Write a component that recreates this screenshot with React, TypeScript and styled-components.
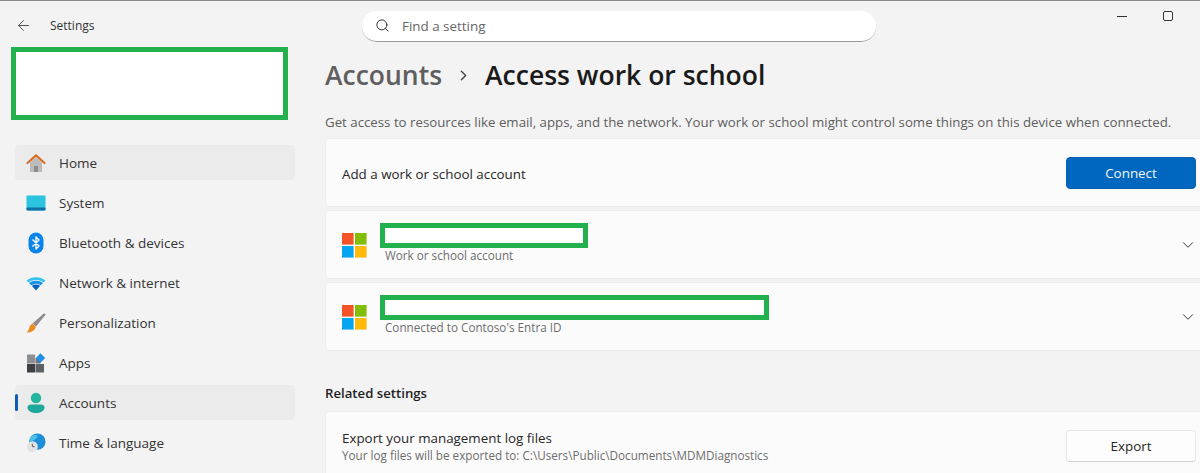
import React from "react";
import styled, { createGlobalStyle } from "styled-components";
import { ArrowLeft, ChevronDown, ChevronRight, Search } from "lucide-react";

const GlobalStyle = createGlobalStyle`
  html, body {
    margin: 0;
    padding: 0;
    height: 100%;
    overflow: hidden;
    background: #f3f3f3;
  }
  * {
    box-sizing: border-box;
  }
`;

const Page = styled.div`
  width: 1200px;
  height: 473px;
  overflow: hidden;
  display: flex;
  flex-direction: column;
  background: #f3f3f3;
  border-top: 1px solid #8a8a8a;
  font-family: "Open Sans", "Noto Sans", sans-serif;
  color: #1b1b1b;
`;

const TitleBar = styled.header`
  height: 46px;
  flex-shrink: 0;
  display: flex;
  align-items: center;
  padding: 2px 0 0 15px;
`;

const BackButton = styled.div`
  width: 17px;
  display: flex;
  color: #444;
`;

const AppName = styled.span`
  margin-left: 18px;
  width: 312px;
  font-size: 12px;
  color: #333;
`;

const SearchBox = styled.div`
  width: 514px;
  height: 31px;
  margin-top: 3px;
  display: flex;
  align-items: center;
  gap: 12px;
  padding: 0 0 1px 13px;
  background: #fff;
  border-radius: 15px;
  border-bottom: 1px solid #9a9a9a;
  font-size: 13.4px;
  color: #666;
`;

const WindowControls = styled.div`
  margin-left: auto;
  margin-right: 27px;
  margin-top: -18px;
  display: flex;
  align-items: center;
  gap: 36px;
`;

const Minimize = styled.div`
  width: 10px;
  height: 1px;
  background: #333;
`;

const Maximize = styled.div`
  width: 10px;
  height: 10px;
  border: 1px solid #333;
  border-radius: 2px;
`;

const Body = styled.div`
  flex: 1;
  display: flex;
  min-height: 0;
`;

const Sidebar = styled.aside`
  width: 295px;
  flex-shrink: 0;
  padding-left: 11px;
`;

const RedactedProfile = styled.div`
  width: 277px;
  height: 73px;
  background: #fff;
  border: 5px solid #22b14c;
`;

const Nav = styled.nav`
  margin: 25px 0 0 4px;
  display: flex;
  flex-direction: column;
  gap: 5px;
`;

const NavItem = styled.div<{ $active?: boolean }>`
  position: relative;
  height: 35px;
  flex-shrink: 0;
  display: flex;
  align-items: center;
  gap: 13px;
  padding: 1px 0 0 11px;
  border-radius: 4px;
  font-size: 13.5px;
  color: #333;
  background: ${(p) => (p.$active ? "#ecebeb" : "transparent")};
`;

const ActiveMark = styled.span`
  position: absolute;
  left: 0;
  top: 9px;
  width: 3px;
  height: 17px;
  border-radius: 2px;
  background: #0a5fb4;
`;

const IconSlot = styled.span`
  width: 20px;
  height: 22px;
  flex-shrink: 0;
  display: flex;
  align-items: center;
  justify-content: center;
`;

const Main = styled.main`
  flex: 1;
  min-width: 0;
  margin-left: 30px;
`;

const Breadcrumb = styled.div`
  height: 56px;
  display: flex;
  align-items: center;
  font-size: 26.5px;
  font-weight: 600;
  color: #1a1a1a;
`;

const Parent = styled.span`
  color: #5f5f5f;
`;

const Crumb = styled.span`
  width: 43px;
  display: flex;
  justify-content: center;
  color: #444;
`;

const Description = styled.p`
  margin: 10px 0 6px;
  font-size: 13.27px;
  line-height: 19px;
  color: #5e5e5e;
  white-space: nowrap;
`;

const Cards = styled.div`
  display: flex;
  flex-direction: column;
  gap: 3px;
  margin-right: -12px;
`;

const Card = styled.section`
  height: 69px;
  flex-shrink: 0;
  display: flex;
  align-items: center;
  padding: 0 16px;
  background: #fbfbfb;
  border: 1px solid #ececec;
  border-radius: 4px;
`;

const CardTitle = styled.div<{ $alone?: boolean }>`
  padding-top: ${(p) => (p.$alone ? "3px" : "0")};
  font-size: 13.36px;
  line-height: 19px;
  color: #262626;
`;

const CardText = styled.div`
  flex: 1;
  min-width: 0;
`;

const CardNote = styled.div`
  font-size: 11.7px;
  line-height: 14px;
  color: #6d6d6d;
`;

const ConnectButton = styled.div`
  width: 130px;
  height: 32px;
  margin-right: -1px;
  padding-top: 1px;
  display: flex;
  align-items: center;
  justify-content: center;
  background: #0067c0;
  border: 1px solid #0a5fb0;
  border-radius: 4px;
  font-size: 13.4px;
  color: #f2f7fc;
`;

const ExportButton = styled.div`
  width: 130px;
  height: 32px;
  margin-right: -1px;
  display: flex;
  align-items: center;
  justify-content: center;
  background: #fdfdfd;
  border: 1px solid #e6e6e6;
  border-bottom-color: #d2d2d2;
  border-radius: 4px;
  font-size: 13.4px;
  color: #262626;
`;

const AccountLogo = styled.svg`
  width: 25px;
  height: 25px;
  flex-shrink: 0;
  margin: 2px 18px 0 0;
`;

const AccountInfo = styled.div`
  flex: 1;
  min-width: 0;
  align-self: flex-start;
  padding-top: 12px;
`;

const RedactedName = styled.div<{ $width: number }>`
  width: ${(p) => p.$width}px;
  height: 25px;
  margin-left: -5px;
  background: #fff;
  border: 5px solid #22b14c;
`;

const Chevron = styled.div`
  display: flex;
  margin-right: -2px;
  color: #333;
`;

const SectionTitle = styled.h2`
  margin: 33px 0 8px;
  font-size: 13.2px;
  line-height: 19px;
  font-weight: 600;
  color: #1f1f1f;
`;

const MsLogo = () => (
  <AccountLogo viewBox="0 0 25 25">
    <rect x="0" y="0" width="11.6" height="11.6" fill="#f35325" />
    <rect x="13" y="0" width="11.6" height="11.6" fill="#81bc06" />
    <rect x="0" y="13" width="11.6" height="11.6" fill="#05a6f0" />
    <rect x="13" y="13" width="11.6" height="11.6" fill="#ffba08" />
  </AccountLogo>
);

const HomeIcon = () => (
  <svg width="20" height="20" viewBox="0 0 20 20">
    <path d="M4 9.5 10 4l6 5.500V19h-4v-5H8v5H4z" fill="#bdbbba" />
    <path d="M8 13h4v6H8z" fill="#8e8c8b" />
    <path d="M1.500 10 10 2.200 18.500 10" fill="none" stroke="#d9681f" strokeWidth="2" strokeLinecap="round" strokeLinejoin="round" />
  </svg>
);

const SystemIcon = () => (
  <svg width="20" height="20" viewBox="0 0 20 20">
    <rect x="0.500" y="2.500" width="19" height="15" rx="1" fill="#2bc3de" />
    <rect x="0.500" y="14.500" width="19" height="3" rx="1" fill="#0f6fa8" />
  </svg>
);

const BluetoothIcon = () => (
  <svg width="20" height="22" viewBox="0 0 20 22">
    <rect x="2.500" y="0.500" width="15" height="21" rx="7.500" fill="#0a84ea" />
    <path d="M6.500 7.500 13 14l-3 3V5l3 3-6.500 6.500" fill="none" stroke="#fff" strokeWidth="1.400" strokeLinejoin="round" />
  </svg>
);

const WifiIcon = () => (
  <svg width="20" height="16" viewBox="0 0 20 16">
    <path d="M0.500 5.500C5.500 1 14.500 1 19.500 5.500L17.500 7.500C13 4.300 7 4.300 2.500 7.500z" fill="#34c3ee" />
    <path d="M3 8C7.200 5 12.800 5 17 8L14.800 10.200C11.800 8.200 8.200 8.200 5.200 10.200z" fill="#1593e4" />
    <path d="M5.800 10.800C8.200 9.200 11.800 9.200 14.200 10.800L10 15.500z" fill="#0a63c4" />
  </svg>
);

const BrushIcon = () => (
  <svg width="20" height="20" viewBox="0 0 20 20">
    <path d="M18 0.300 19.700 1.500 10 13.500 6.500 10.500z" fill="#8d8d8d" />
    <path d="M6.500 10.800 9.800 13.700C9 17.500 5 19.700 0.300 19.500 3 18 2.800 16 3.600 13.800 4.200 12.400 5.200 11.500 6.500 10.800z" fill="#ee8a1d" />
  </svg>
);

const AppsIcon = () => (
  <svg width="20" height="20" viewBox="0 0 20 20">
    <rect x="1" y="1.500" width="8" height="9" fill="#8b8f94" />
    <rect x="1" y="11" width="8" height="8.500" fill="#3c3f43" />
    <rect x="9.500" y="11" width="8.500" height="8.500" fill="#5d6166" />
    <rect x="9.500" y="5" width="5" height="5.500" fill="#6f7378" />
    <path d="M14.500 0.300 19.200 5 14.500 9.700 9.800 5z" fill="#1f8fe8" />
  </svg>
);

const AccountIcon = () => (
  <svg width="20" height="22" viewBox="0 0 20 22">
    <circle cx="10" cy="6" r="5.200" fill="#22b5a0" />
    <path d="M1.500 15.500C1.500 13.500 3 12.500 5 12.500h10c2 0 3.500 1 3.500 3 0 3.500-4 5.500-8.500 5.500s-8.500-2-8.500-5.500z" fill="#1ea89a" />
  </svg>
);

const TimeIcon = () => (
  <svg width="22" height="22" viewBox="0 0 22 22">
    <circle cx="12.500" cy="9.500" r="9" fill="#1d8fd8" />
    <path d="M6 3.500C9 1.500 12 2 13 3.500 12 6 9.500 6.500 8 8.500 6.500 9.500 4.500 9 3.500 9 3.500 7 4.500 5 6 3.500z" fill="#4cc2e8" />
    <circle cx="7" cy="15" r="6" fill="#e3e3e3" />
    <path d="M7 11.800V15h2.500" fill="none" stroke="#555" strokeWidth="1" />
  </svg>
);

const navItems = [
  { label: "Home", icon: <HomeIcon />, active: true },
  { label: "System", icon: <SystemIcon /> },
  { label: "Bluetooth & devices", icon: <BluetoothIcon /> },
  { label: "Network & internet", icon: <WifiIcon /> },
  { label: "Personalization", icon: <BrushIcon /> },
  { label: "Apps", icon: <AppsIcon /> },
  { label: "Accounts", icon: <AccountIcon />, active: true, mark: true },
  { label: "Time & language", icon: <TimeIcon /> },
];

export default function App() {
  return (
    <Page>
      <GlobalStyle />
      <TitleBar>
        <BackButton>
          <ArrowLeft size={17} strokeWidth={1.3} />
        </BackButton>
        <AppName>Settings</AppName>
        <SearchBox>
          <Search size={15} strokeWidth={1.6} color="#333" />
          Find a setting
        </SearchBox>
        <WindowControls>
          <Minimize />
          <Maximize />
        </WindowControls>
      </TitleBar>
      <Body>
        <Sidebar>
          <RedactedProfile />
          <Nav>
            {navItems.map((item) => (
              <NavItem key={item.label} $active={item.active}>
                {item.mark && <ActiveMark />}
                <IconSlot>{item.icon}</IconSlot>
                {item.label}
              </NavItem>
            ))}
          </Nav>
        </Sidebar>
        <Main>
          <Breadcrumb>
            <Parent>Accounts</Parent>
            <Crumb>
              <ChevronRight size={17} strokeWidth={2} />
            </Crumb>
            Access work or school
          </Breadcrumb>
          <Description>
            Get access to resources like email, apps, and the network. Your work or school might control some things on this device when connected.
          </Description>
          <Cards>
            <Card>
              <CardText>
                <CardTitle $alone>Add a work or school account</CardTitle>
              </CardText>
              <ConnectButton>Connect</ConnectButton>
            </Card>
            <Card>
              <MsLogo />
              <AccountInfo>
                <RedactedName $width={208} />
                <CardNote>Work or school account</CardNote>
              </AccountInfo>
              <Chevron>
                <ChevronDown size={18} strokeWidth={1.3} />
              </Chevron>
            </Card>
            <Card>
              <MsLogo />
              <AccountInfo>
                <RedactedName $width={389} />
                <CardNote>Connected to Contoso's Entra ID</CardNote>
              </AccountInfo>
              <Chevron>
                <ChevronDown size={18} strokeWidth={1.3} />
              </Chevron>
            </Card>
          </Cards>
          <SectionTitle>Related settings</SectionTitle>
          <Cards>
            <Card>
              <CardText>
                <CardTitle>Export your management log files</CardTitle>
                <CardNote>Your log files will be exported to: C:\Users\Public\Documents\MDMDiagnostics</CardNote>
              </CardText>
              <ExportButton>Export</ExportButton>
            </Card>
          </Cards>
        </Main>
      </Body>
    </Page>
  );
}
